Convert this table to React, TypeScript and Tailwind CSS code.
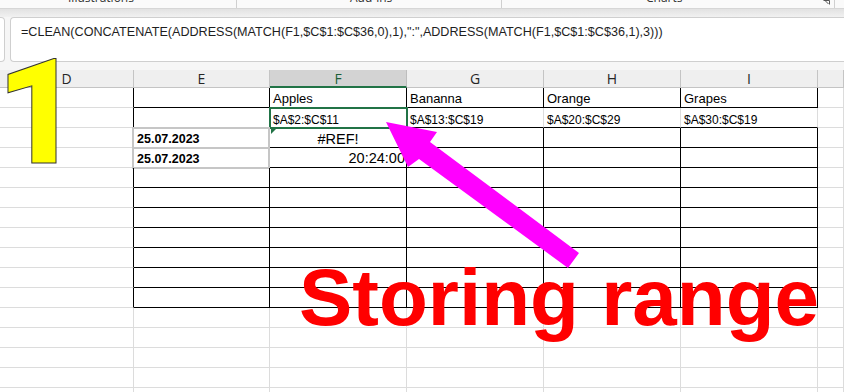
import React from "react";

type Col = { key: string; w: string };

const COLS: Col[] = [
  { key: "D", w: "w-[134px]" },
  { key: "E", w: "w-[136px]" },
  { key: "F", w: "w-[137px]" },
  { key: "G", w: "w-[137px]" },
  { key: "H", w: "w-[137px]" },
  { key: "I", w: "w-[137px]" },
  { key: "J", w: "w-[26px]" },
];

const FORMULA =
  '=CLEAN(CONCATENATE(ADDRESS(MATCH(F1,$C$1:$C$36,0),1),":",ADDRESS(MATCH(F1,$C$1:$C$36,1),3)))';

// row -> col -> text
const CELLS: Record<number, Record<number, string>> = {
  1: { 2: "Apples", 3: "Bananna", 4: "Orange", 5: "Grapes" },
  2: { 2: "$A$2:$C$11", 3: "$A$13:$C$19", 4: "$A$20:$C$29", 5: "$A$30:$C$19" },
  3: { 1: "25.07.2023", 2: "#REF!" },
  4: { 1: "25.07.2023", 2: "20:24:00" },
};

const ROWS = Array.from({ length: 16 }, (_, i) => i + 1);

function Cell({ row, col }: { row: number; col: number }) {
  const inTable = row <= 11 && col >= 1 && col <= 5;
  const leftEdge = row <= 11 && col === 0;
  const text = CELLS[row]?.[col];

  let border = "border-r border-b border-r-[#dcdcdc] border-b-[#dcdcdc]";
  if (inTable) {
    border =
      row === 2
        ? "border-r border-b border-r-[#dcdcdc] border-b-black"
        : "border-r border-b border-black";
  } else if (leftEdge) {
    border = "border-r border-b border-r-black border-b-[#dcdcdc]";
  }

  let textCls = "pl-[3px] text-[13px] leading-[20px] pt-[1px]";
  if (row === 2) textCls = "pl-[3px] text-[12px] leading-[20px] pt-[2px]";
  if (col === 1 && (row === 3 || row === 4))
    textCls = "pl-[3px] text-[12.5px] font-bold leading-[20px] pt-[1px]";
  if (col === 2 && row === 3) textCls = "text-center text-[14.5px] leading-[20px] pt-[1px]";
  if (col === 2 && row === 4) textCls = "text-right pr-[1px] text-[14.5px] leading-[20px]";

  return (
    <div className={`relative h-[20px] shrink-0 ${COLS[col].w} ${border}`}>
      {text && <div className={`whitespace-nowrap text-black ${textCls}`}>{text}</div>}
      {col === 1 && (row === 3 || row === 4) && (
        <span className="absolute -left-[2px] -top-[1px] w-[138px] h-[22px] border-[2px] border-[#c6c6c6]" />
      )}
      {col === 2 && row === 2 && (
        <span className="absolute -left-[1px] -top-[1px] w-[139px] h-[22px] border-[2px] border-[#217346]" />
      )}
      {col === 2 && row === 3 && (
        <span className="absolute left-[1px] top-0 w-0 h-0 border-t-[6px] border-t-[#217346] border-r-[6px] border-r-transparent" />
      )}
    </div>
  );
}

export default function App() {
  return (
    <div className="relative w-[844px] h-[392px] overflow-hidden bg-white font-['Liberation_Sans',Arial,sans-serif]">
      {/* ribbon group labels, cut off at the top */}
      <div className="flex h-[9px] overflow-hidden bg-[#fafafa] border-b border-[#d6d6d6] font-['Open_Sans',sans-serif] text-[12px] text-[#333]">
        <div className="w-[237px] shrink-0 border-r border-[#d0d0d0] pl-[68px] leading-[12px] -mt-[8px]">
          Illustrations
        </div>
        <div className="w-[265px] shrink-0 border-r border-[#d0d0d0] pl-[113px] leading-[12px] -mt-[8px]">
          Add-ins
        </div>
        <div className="relative w-[333px] shrink-0 border-r border-[#d0d0d0] pl-[144px] leading-[12px] -mt-[8px]">
          Charts
          <svg className="absolute right-[4px] top-[8px]" width="7" height="5" viewBox="0 0 7 5">
            <path d="M0.5 0.5 H6.5 M6.5 0.5 V4.5 M2 0.5 L5.5 4" stroke="#555" strokeWidth="1" fill="none" />
          </svg>
        </div>
      </div>
      <div className="h-[8px] bg-gradient-to-b from-[#e2e2e2] to-[#f1f1f1]" />

      {/* formula bar */}
      <div className="flex h-[53px] bg-[#f6f6f6]">
        <div className="w-[5px] h-[45px] shrink-0 rounded-r-[4px] border border-l-0 border-[#cfcfcf] bg-white" />
        <div className="ml-[5px] h-[45px] flex-1 rounded-l-[4px] border border-r-0 border-[#cfcfcf] bg-white pl-[10px] pt-[5px]">
          <div className="whitespace-nowrap text-[12.6px] leading-[18px] text-[#1e1e1e] font-['Liberation_Sans',Arial,sans-serif]">
            {FORMULA}
          </div>
        </div>
      </div>

      {/* column headers */}
      <div className="flex h-[18px] bg-[#efefef] font-['Open_Sans',sans-serif] text-[14px] leading-[17px]">
        {COLS.map((c) => (
          <div
            key={c.key}
            className={`shrink-0 text-center ${c.w} ${
              c.key === "F"
                ? "bg-[#d3d3d3] border-b-2 border-b-[#217346] border-r border-r-[#bdbdbd] text-[#1b5e37]"
                : "border-b border-r border-[#c4c4c4] text-[#262626]"
            }`}
          >
            {c.key === "J" ? "" : c.key}
          </div>
        ))}
      </div>

      {/* grid */}
      <div className="flex flex-col">
        {ROWS.map((r) => (
          <div key={r} className="flex">
            {COLS.map((_, ci) => (
              <Cell key={ci} row={r} col={ci} />
            ))}
          </div>
        ))}
      </div>

      {/* annotations drawn on top of the sheet */}
      <div className="absolute left-[-4px] top-[40px] text-[147px] leading-none font-black text-[#ffff00] font-['Roboto',sans-serif] [-webkit-text-stroke:1px_#333]">
        1
      </div>

      <svg className="absolute inset-0 pointer-events-none" width="844" height="392" viewBox="0 0 844 392">
        <polygon
          points="386,122 437,132 430,142 579,253 568,268 419,159 408,167"
          fill="#ff00ff"
        />
      </svg>

      <div className="absolute left-[299px] top-[258px] whitespace-nowrap text-[80px] leading-none font-bold text-[#ff0000] font-['Liberation_Sans',Arial,sans-serif]">
        Storing range
      </div>
    </div>
  );
}
